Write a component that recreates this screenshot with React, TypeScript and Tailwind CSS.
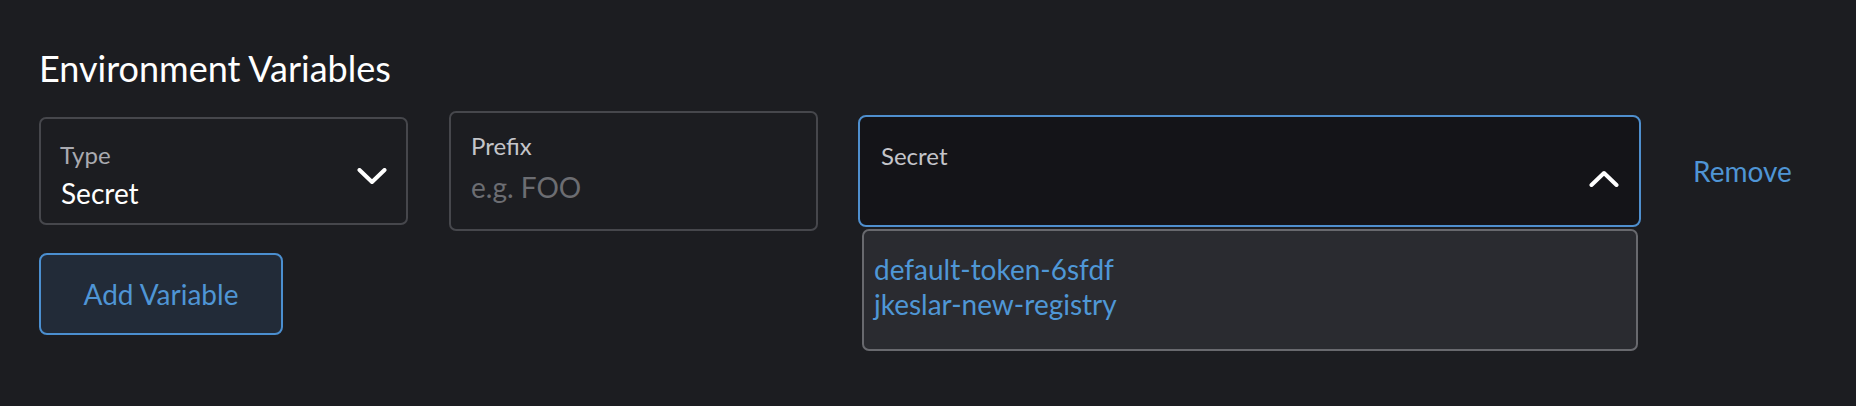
import { useState } from 'react';

const secrets = ['default-token-6sfdf', 'jkeslar-new-registry'];

function Chevron({ up = false }: { up?: boolean }) {
  return (
    <svg width="30" height="17" viewBox="0 0 30 17" fill="none" className="shrink-0">
      <path
        d={up ? 'M2.5 15 L15 3 L27.5 15' : 'M2.5 2 L15 14 L27.5 2'}
        stroke="#ffffff"
        strokeWidth="4"
        strokeLinecap="round"
        strokeLinejoin="round"
      />
    </svg>
  );
}

export default function App() {
  const [open, setOpen] = useState(true);
  const [prefix, setPrefix] = useState('');

  return (
    <div
      className="w-full h-[406px] bg-[#1c1d21] pl-[39px] pt-[48px] text-white overflow-hidden"
      style={{ fontFamily: 'Lato, "Noto Sans", sans-serif' }}>
      <h2 className="text-[36px] leading-[40px] font-normal text-white">Environment Variables</h2>

      <div className="flex items-start mt-[23px]">
        {/* type + add */}
        <div className="flex flex-col items-start">
          <div className="mt-[6px] w-[369px] h-[108px] flex items-center border-2 border-[#46474c] rounded-[7px] pr-[19px]">
            <div className="flex-1 flex flex-col pl-[19px] pt-[22px] self-start">
              <span className="text-[24px] leading-[28px] text-[#a9aab0]">Type</span>
              <span className="text-[28px] leading-[34px] mt-[7px] pl-[1px] text-white">Secret</span>
            </div>
            <div className="mt-[10px]">
              <Chevron />
            </div>
          </div>
          <button className="mt-[28px] w-[244px] h-[82px] rounded-[8px] border-2 border-[#4b8fd0] bg-[#222b38] text-[28px] leading-[34px] text-[#4f95d5]">
            Add Variable
          </button>
        </div>

        {/* prefix */}
        <label className="ml-[41px] w-[369px] h-[120px] flex flex-col border-2 border-[#46474c] rounded-[7px] pl-[20px] pt-[19px]">
          <span className="text-[24px] leading-[28px] text-[#c4c5ca]">Prefix</span>
          <input
            value={prefix}
            onChange={(e) => setPrefix(e.target.value)}
            placeholder="e.g. FOO"
            className="mt-[10px] bg-transparent outline-none text-[28px] leading-[34px] h-[34px] text-white placeholder:text-[#6c6d72]"
          />
        </label>

        {/* secret select */}
        <div className="relative ml-[40px] mt-[4px] w-[783px]">
          <div
            onClick={() => setOpen((o) => !o)}
            className="h-[112px] flex items-center border-2 border-[#4f8fce] rounded-[8px] bg-[#141418] pr-[20px] cursor-pointer">
            <div className="flex-1 self-start pl-[21px] pt-[25px] text-[24px] leading-[28px] text-[#c4c5ca]">Secret</div>
            <div className="mt-[15px]">
              <Chevron up={open} />
            </div>
          </div>
          {open && (
            <ul className="absolute top-full left-[4px] right-[3px] mt-[2px] h-[122px] border-2 border-[#68696e] rounded-[7px] bg-[#2a2b30] pl-[10px] pt-[21px]">
              {secrets.map((s) => (
                <li key={s} className="text-[28px] leading-[35px] text-[#4f97d6] cursor-pointer">
                  {s}
                </li>
              ))}
            </ul>
          )}
        </div>

        <button className="ml-[52px] mt-[43px] text-[28px] leading-[34px] text-[#4f95d5]">Remove</button>
      </div>
    </div>
  );
}
